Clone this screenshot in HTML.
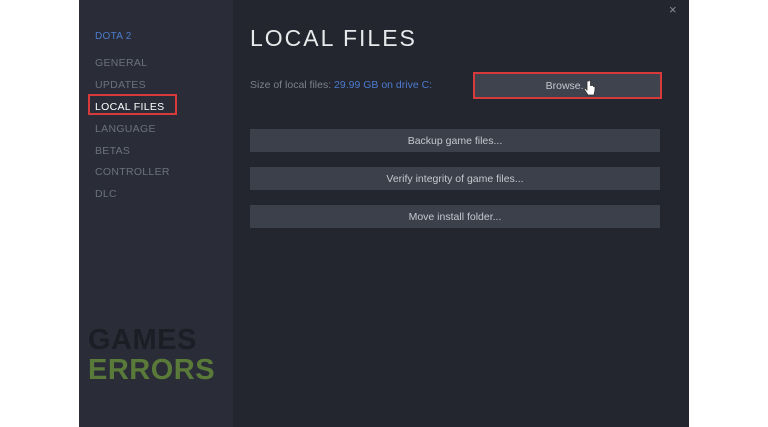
<!DOCTYPE html>
<html><head><style>
body{margin:0;width:768px;height:427px;background:#fff;position:relative;overflow:hidden;font-family:"Liberation Sans",sans-serif}
.dlg{position:absolute;left:79px;top:0;width:610px;height:427px;background:#23262e}
.side{position:absolute;left:0;top:0;width:154px;height:427px;background:#2a2d37}
.nav{position:absolute;left:16px;font-size:10.5px;color:#6b717c;letter-spacing:.3px}
.btn{position:absolute;left:171px;width:410px;height:23px;background:#3b404b;color:#c5c8ce;font-size:10.5px;text-align:center;line-height:24px}
</style></head><body>
<div class="dlg">
<div class="side"></div>
<div class="nav" style="top:31px;color:#4c7bd0;font-size:10px">DOTA 2</div>
<div class="nav" style="top:57px">GENERAL</div>
<div class="nav" style="top:79px">UPDATES</div>
<div class="nav" style="top:101px;color:#fff">LOCAL FILES</div>
<div style="position:absolute;left:9px;top:94px;width:89px;height:21px;border:2px solid #d63a3a;box-sizing:border-box"></div>
<div class="nav" style="top:123px">LANGUAGE</div>
<div class="nav" style="top:145px">BETAS</div>
<div class="nav" style="top:166px">CONTROLLER</div>
<div class="nav" style="top:188px">DLC</div>
<div style="position:absolute;left:9px;top:325px;font-size:29px;font-weight:bold;line-height:30px;letter-spacing:.5px">
<div style="color:#1b1e25">GAMES</div><div style="color:#5a7a3a">ERRORS</div></div>
<div style="position:absolute;left:171px;top:25px;font-size:23px;color:#e8e9eb;letter-spacing:2px">LOCAL FILES</div>
<div style="position:absolute;left:171px;top:79px;font-size:10.5px;color:#7b818c">Size of local files: <span style="color:#4c7bd0">29.99 GB on drive C:</span></div>
<div class="btn" style="left:394px;top:72px;width:189px;height:27px;line-height:25px;border:2px solid #d63a3a;box-sizing:border-box;background:#3e434e">Browse...</div>
<svg style="position:absolute;left:505px;top:80px" width="12" height="16" viewBox="0 0 12 16"><path d="M3 1v9l-1.5-1.5c-1-.5-1.8.4-1 1.2L4 15h6l1-5V7c0-1-1.5-1-1.5 0V6c0-1-1.5-1-1.5 0c0-1-1.5-1-1.5 0V1c0-1-1.5-1-1.5 0z" fill="#fff" stroke="#333" stroke-width=".8"/></svg>
<div class="btn" style="top:129px">Backup game files...</div>
<div class="btn" style="top:167px">Verify integrity of game files...</div>
<div class="btn" style="top:205px">Move install folder...</div>
<div style="position:absolute;left:590px;top:2px;color:#8a8f98;font-size:13px">×</div>
</div>
</body></html>
